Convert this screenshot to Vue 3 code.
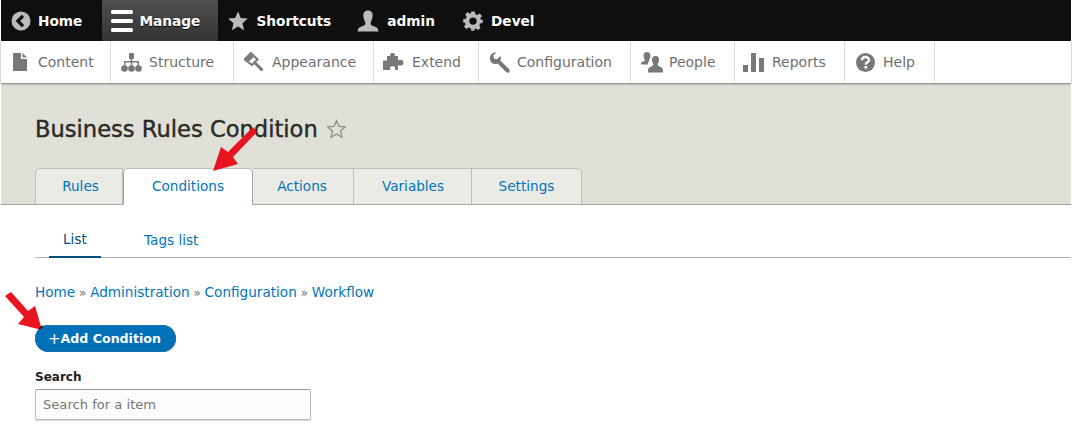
<script setup>
const secondary = ['Content', 'Structure', 'Appearance', 'Extend', 'Configuration', 'People', 'Reports', 'Help']
const tabs = ['Rules', 'Conditions', 'Actions', 'Variables', 'Settings']
const crumbs = ['Home', 'Administration', 'Configuration', 'Workflow']
</script>

<template>
  <div class="page">
    <nav class="top">
      <a class="top-item home">
        <svg width="20" height="20" viewBox="0 0 20 20"><circle cx="10" cy="10" r="9.5" fill="#bbb"/><path d="M12 4.8 L6.8 10 L12 15.2" fill="none" stroke="#0f0f0f" stroke-width="3.2"/></svg>
        <span>Home</span>
      </a>
      <a class="top-item manage">
        <svg width="22" height="22" viewBox="0 0 22 22" fill="#fff"><rect x="0" y="0" width="22" height="4" rx="1.5"/><rect x="0" y="9" width="22" height="4" rx="1.5"/><rect x="0" y="18" width="22" height="4" rx="1.5"/></svg>
        <span>Manage</span>
      </a>
      <a class="top-item shortcuts">
        <svg width="20" height="20" viewBox="0 0 20 20"><path d="M10 0.5 L12.8 7 L19.8 7.6 L14.5 12.2 L16.1 19.2 L10 15.5 L3.9 19.2 L5.5 12.2 L0.2 7.6 L7.2 7 Z" fill="#bbb"/></svg>
        <span>Shortcuts</span>
      </a>
      <a class="top-item admin">
        <svg width="22" height="22" viewBox="0 0 22 22"><path d="M11 0.5 C14.5 0.5 16 3 15.6 6.5 C15.3 9.5 14 11.5 13.6 13 C13.4 15 15 15.5 18 16.7 C20.5 17.7 21.2 19 21.5 21.5 L0.5 21.5 C0.8 19 1.5 17.7 4 16.7 C7 15.5 8.6 15 8.4 13 C8 11.5 6.7 9.5 6.4 6.5 C6 3 7.5 0.5 11 0.5 Z" fill="#bbb"/></svg>
        <span>admin</span>
      </a>
      <a class="top-item devel">
        <svg width="20" height="20" viewBox="0 0 20 20"><path fill="#bbb" fill-rule="evenodd" d="M8.2 0.5 H11.8 L12.3 3.2 L14.4 4.1 L16.7 2.5 L19 5 L17.3 7.2 L18.1 9 L19.8 8.4 V11.8 L17.2 12.4 L16.3 14.4 L17.6 16.8 L15.1 19 L12.8 17.4 L11.6 18 V19.8 H8.3 L7.8 17.3 L5.7 16.4 L3.4 18 L1 15.6 L2.6 13.2 L1.8 11.4 L0.2 11.6 V8.3 L2.8 7.8 L3.7 5.7 L2.2 3.4 L4.6 1 L7 2.7 L7.9 2.3 Z M10 6.4 A3.7 3.7 0 1 0 10 13.8 A3.7 3.7 0 1 0 10 6.4 Z"/></svg>
        <span>Devel</span>
      </a>
    </nav>

    <nav class="sub">
      <a v-for="(item, i) in secondary" :key="item" class="sub-item" :class="'s' + i">
        <svg v-if="i === 0" width="14" height="18" viewBox="0 0 14 18"><path d="M0 0 H8 V6 H14 V18 H0 Z M9.5 0 L14 4.5 H9.5 Z" fill="#787878"/></svg>
        <svg v-else-if="i === 1" width="21" height="19" viewBox="0 0 21 19" fill="#787878"><rect x="8" y="0" width="5" height="6" rx="1"/><path d="M9.7 5 H11.3 V8 H18 V13 H16.6 V9.6 H11.3 V13 H9.7 V9.6 H4.4 V13 H3 V8 H9.7 Z"/><circle cx="3.5" cy="15.5" r="3.3"/><circle cx="10.5" cy="15.5" r="3.3"/><circle cx="17.5" cy="15.5" r="3.3"/></svg>
        <svg v-else-if="i === 2" width="20" height="20" viewBox="0 0 20 20"><path d="M0.5 7.5 L7 1 L13.5 7.5 L8 13 Z M3 7.5 L7 3.5" fill="#fff" stroke="#787878" stroke-width="2"/><path d="M2 7.5 L7 2.5 L9.5 5 L4.5 10 Z" fill="#787878"/><path d="M11 11 L18.5 18.5" stroke="#787878" stroke-width="3"/></svg>
        <svg v-else-if="i === 3" width="21" height="19" viewBox="0 0 21 19"><path fill="#787878" d="M4 3 H7.5 C6.5 1.5 7 0 9.5 0 C12 0 12.5 1.5 11.5 3 H15 V7.5 C16.5 6.3 20.5 6.3 20.5 9.8 C20.5 13 16.5 13 15 12 V17 H11.8 C13 15 11.8 13.2 9.6 13.2 C7.3 13.2 6.2 15 7.4 17 H0 V7.5 H4 Z"/></svg>
        <svg v-else-if="i === 4" width="21" height="21" viewBox="0 0 21 21"><path fill="#787878" d="M7.5 0.3 L4.2 3.4 L5 6.4 L8 7.2 L11.4 4 C12.2 6 11.8 7.5 11.3 8.4 L20 17 C21 18.2 21 19.3 20.1 20.2 C19.2 21.1 18 21 17 20 L8.6 11.5 C6.5 12.5 4 12 2.5 10.5 C0.5 8.5 0.3 5.5 1.8 3 C3.3 0.8 5.5 0 7.5 0.3 Z"/></svg>
        <svg v-else-if="i === 5" width="22" height="21" viewBox="0 0 22 21" fill="#787878"><path d="M6 0 C8.6 0 9.7 1.8 9.4 4.3 C9.2 6.3 8.2 7.6 8 8.6 L8 9.4 C7 10.2 6.6 11 7 12.6 L1.5 12.6 C0.2 12.6 -0.2 11.8 0.3 10.8 C1 9.6 3.6 9.6 4 8.6 C3.7 7.6 2.8 6.3 2.6 4.3 C2.3 1.8 3.4 0 6 0 Z"/><path d="M14.5 4 C17.2 4 18.3 6 18 8.5 C17.8 10.4 16.9 11.7 16.6 12.8 C16.6 14.6 21.6 14.4 21.9 18 L21.9 20.5 L7.1 20.5 L7.1 18 C7.4 14.4 12.4 14.6 12.4 12.8 C12.1 11.7 11.2 10.4 11 8.5 C10.7 6 11.8 4 14.5 4 Z"/></svg>
        <svg v-else-if="i === 6" width="22" height="19" viewBox="0 0 22 19" fill="#787878"><rect x="0" y="12" width="5" height="7"/><rect x="8" y="0" width="5" height="19"/><rect x="16" y="5" width="5" height="14"/></svg>
        <svg v-else width="19" height="19" viewBox="0 0 19 19"><circle cx="9.5" cy="9.5" r="9.5" fill="#787878"/><path d="M6 7.3 C6 3 13 3 13 7 C13 9.3 9.8 9.3 9.8 11.5" fill="none" stroke="#fff" stroke-width="2.4"/><rect x="8.5" y="13" width="2.6" height="2.6" fill="#fff"/></svg>
        <span>{{ item }}</span>
      </a>
    </nav>

    <header class="head">
      <div class="title-row">
        <h1>Business Rules Condition</h1>
        <svg width="21" height="20" viewBox="0 0 21 20"><path d="M10.5 1.6 L13 7.4 L19.3 7.9 L14.5 12 L16 18.2 L10.5 14.9 L5 18.2 L6.5 12 L1.7 7.9 L8 7.4 Z" fill="none" stroke="#8a8a7c" stroke-width="1.2"/></svg>
      </div>
      <div class="tabs">
        <a v-for="t in tabs" :key="t" class="tab" :class="[t.toLowerCase(), { active: t === 'Conditions' }]">{{ t }}</a>
      </div>
    </header>

    <main class="content">
      <div class="subtabs">
        <a class="subtab on">List</a>
        <a class="subtab">Tags list</a>
      </div>
      <div class="crumbs">
        <template v-for="(c, i) in crumbs" :key="c">
          <span v-if="i" class="sep"> » </span><a>{{ c }}</a>
        </template>
      </div>
      <a class="btn"><span class="plus">+</span>Add Condition</a>
      <label class="lbl">Search</label>
      <input class="search" placeholder="Search for a item" />
    </main>

    <svg class="arrow a1" width="46" height="46" viewBox="0 0 46 46"><path d="M0 45 L8 21 L15 26 L40 1 L44 6 L20 31 L25 38 Z" fill="#e8141f"/></svg>
    <svg class="arrow a2" width="42" height="42" viewBox="0 0 42 42"><path d="M1 5 L7 1 L24 20 L31 15 L38 39 L14 33 L20 26 Z" fill="#e8141f"/><path d="M35 38 L39 35" stroke="#1a1a1a" stroke-width="1.6"/></svg>
  </div>
</template>

<style>
html, body { margin: 0; background: #fff; }
</style>

<style scoped>
.page {
  position: relative;
  width: 1072px;
  height: 443px;
  overflow: hidden;
  padding: 0 1px;
  box-sizing: border-box;
  background: #fff;
  font-family: "DejaVu Sans", sans-serif;
  font-size: 13.6px;
}
a { text-decoration: none; }
.top {
  display: flex;
  align-items: stretch;
  height: 41px;
  background: #0f0f0f;
  color: #fff;
  font-weight: 700;
  font-size: 13.7px;
}
.top-item { display: flex; align-items: center; gap: 8px; color: #fff; text-shadow: 0 1px 0 #000; }
.top-item svg { flex: none; }
.home { padding: 0 20px 0 10px; gap: 7px; }
.manage { width: 116px; box-sizing: border-box; padding-left: 9px; gap: 6px; background: linear-gradient(#4f4f4f, #333); }
.shortcuts { padding: 0 26px 0 10px; }
.admin { padding: 0 28px 0 0; gap: 8px; }
.devel { padding: 0; }

.sub {
  display: flex;
  height: 42px;
  background: #fff;
  color: #666;
  box-shadow: 0 1px 2px rgba(0,0,0,.45);
  position: relative;
  font-size: 14px;
}
.sub-item { display: flex; align-items: center; gap: 7px; color: #6f6f6f; border-right: 1px solid #e0e0d8; box-sizing: border-box; padding-left: 10px; }
.s0 { width: 110px; padding-left: 12px; gap: 11px; }
.s1 { width: 123px; }
.s2 { width: 140px; gap: 8px; }
.s3 { width: 105px; padding-left: 9px; gap: 8px; }
.s4 { width: 152px; }
.s5 { width: 104px; gap: 6px; }
.s6 { width: 110px; padding-left: 8px; }
.s7 { width: 90px; padding-left: 11px; gap: 8px; }

.head {
  height: 122px;
  background: #e0e0d8;
  padding: 0 0 0 34px;
  border-bottom: 1px solid #a6a6a0;
  box-sizing: border-box;
  display: flex;
  flex-direction: column;
  justify-content: flex-end;
}
.title-row { display: flex; align-items: center; gap: 8px; height: 30px; margin-bottom: 24px; }
h1 { margin: 0; font-size: 22.6px; font-weight: 500; color: #2a2a26; font-family: "DejaVu Sans", sans-serif; -webkit-text-stroke: .4px #2a2a26; }
.tabs { display: flex; height: 36px; }
.tab {
  display: flex; align-items: center; justify-content: center;
  box-sizing: border-box;
  padding-bottom: 2px;
  color: #0074bd;
  background: #ebebe6;
  border: 1px solid #bfbfba;
  border-left-width: 0;
  border-bottom: 0;
}
.tab:first-child { border-left-width: 1px; border-top-left-radius: 5px; padding-left: 3px; }
.tab:last-child { border-top-right-radius: 5px; }
.rules { width: 88px; }
.conditions { width: 130px; }
.actions { width: 101px; padding-right: 2px; }
.variables { width: 118px; padding-left: 1px; }
.settings { width: 110px; }
.tab.active { background: #fff; border-left: 1px solid #a6a6a0; border-right: 1px solid #a6a6a0; border-radius: 5px 5px 0 0; margin-bottom: -1px; height: 37px; padding-bottom: 3px; }

.content { padding: 0 0 0 34px; display: flex; flex-direction: column; align-items: flex-start; }
.subtabs { display: flex; align-self: stretch; height: 53px; box-sizing: border-box; border-bottom: 1px solid #b5b5b0; }
.subtab { display: flex; align-items: center; height: 53px; box-sizing: border-box; color: #0074bd; padding-top: 17px; }
.subtab:first-child { margin-left: 14px; padding: 17px 14px 0; width: 52px; box-sizing: border-box; color: #004f80; border-bottom: 2px solid #004f80; }
.subtab + .subtab { margin-left: 43px; }
.crumbs { margin-top: 26px; line-height: 17px; color: #0074bd; white-space: pre; }
.sep { color: #6f6f6f; font-size: 12px; }
.btn {
  display: flex; align-items: center;
  box-sizing: border-box;
  padding-left: 13px;
  width: 141px; height: 27px; margin-top: 23px;
  border-radius: 14px;
  background: #0071b8;
  color: #fff; font-weight: 700; font-size: 12.6px;
  box-shadow: inset 0 0 0 1px #1f6fa8;
}
.plus { margin-right: 0; font-weight: 400; font-size: 15px; }
.lbl { margin-top: 17px; line-height: 17px; font-weight: 700; font-size: 12px; color: #222; }
.search {
  margin-top: 3px;
  width: 276px; height: 31px;
  box-sizing: border-box;
  padding: 0 7px;
  border: 1px solid #b8b8b8;
  border-top-color: #999;
  border-radius: 2px;
  background: #fcfcfa;
  font: 13.1px "DejaVu Sans", sans-serif;
  outline: none;
  box-shadow: 0 1px 1px rgba(0,0,0,.15);
}
.search::placeholder { color: #777; opacity: 1; }
.arrow { position: absolute; }
.a1 { left: 213px; top: 126px; }
.a2 { left: 4px; top: 291px; }
</style>
